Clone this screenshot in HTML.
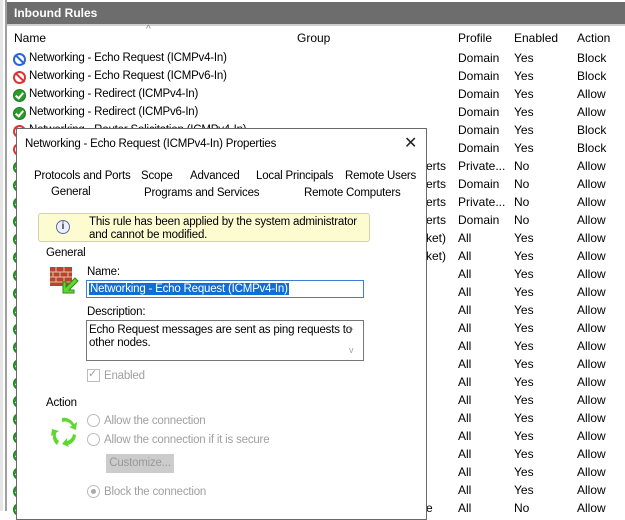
<!DOCTYPE html>
<html><head><style>
body{margin:0;width:625px;height:511px;overflow:hidden;background:#fff;font-family:"Liberation Sans",sans-serif;font-size:12px;color:#000;position:relative}
.a{position:absolute;white-space:nowrap}
.dl{font-size:11.5px;letter-spacing:-0.2px;margin-top:1px}
.ic{position:absolute;width:12px;height:12px;border-radius:50%;left:13px}
.g{background:#2a9a2a;border:1px solid #1c7a1c;width:11px;height:11px}
.g:after{content:"";position:absolute;left:3px;top:1px;width:3px;height:6px;border:solid #fff;border-width:0 2px 2px 0;transform:rotate(40deg)}
.bl{border:2px solid #d33;width:9px;height:9px}
.bl:after{content:"";position:absolute;left:4px;top:-2px;width:2px;height:13px;background:#d33;transform:rotate(-45deg)}
.bb{border-color:#2b66d6}.bb:after{background:#2b66d6}
.dis{color:#a0a0a0}
</style></head><body>
<div class="a" style="left:0;top:0;width:3px;height:511px;background:#e6e6e6"></div>
<div class="a" style="left:5px;top:0;width:2px;height:511px;background:#a0a0a0"></div>
<div class="a" style="left:7px;top:2px;width:618px;height:22px;background:#6d6d6d"></div>
<div class="a" style="left:7px;top:24px;width:618px;height:2px;background:#d0d0d0"></div>
<div class="a" style="left:14px;top:6px;color:#fff;font-weight:bold;font-size:12px">Inbound Rules</div>
<div class="a" style="left:146px;top:24px;font-size:10px;color:#888">^</div>
<div class="a" style="left:14px;top:31px">Name</div>
<div class="a" style="left:297px;top:31px">Group</div>
<div class="a" style="left:458px;top:31px">Profile</div>
<div class="a" style="left:514px;top:31px">Enabled</div>
<div class="a" style="left:577px;top:31px">Action</div>
<div id="rows"></div>
<script>
var d=[["bb","Networking - Echo Request (ICMPv4-In)","","Domain","Yes","Block"],["bl","Networking - Echo Request (ICMPv6-In)","","Domain","Yes","Block"],["g","Networking - Redirect (ICMPv4-In)","","Domain","Yes","Allow"],["g","Networking - Redirect (ICMPv6-In)","","Domain","Yes","Allow"],["bl","Networking - Router Solicitation (ICMPv4-In)","","Domain","Yes","Block"],["bl","","","Domain","Yes","Block"],["g","","erts","Private...","No","Allow"],["g","","erts","Domain","No","Allow"],["g","","erts","Private...","No","Allow"],["g","","erts","Domain","No","Allow"],["g","","ket)","All","Yes","Allow"],["g","","ket)","All","Yes","Allow"]];
for(var i=12;i<25;i++)d.push(["g","","","All","Yes","Allow"]);
d.push(["g","","e","All","No","Allow"]);
var h="";
for(var i=0;i<d.length;i++){var y=51+i*18;var r=d[i];
h+='<div class="ic '+(r[0]=="bb"?"bl bb":r[0])+'" style="top:'+(y+2)+'px"></div>';
if(r[1])h+='<div class="a dl" style="left:29px;top:'+y+'px">'+r[1]+'</div>';
if(r[2])h+='<div class="a" style="left:426px;top:'+y+'px">'+r[2]+'</div>';
h+='<div class="a" style="left:458px;top:'+y+'px">'+r[3]+'</div><div class="a" style="left:514px;top:'+y+'px">'+r[4]+'</div><div class="a" style="left:577px;top:'+y+'px">'+r[5]+'</div>';}
document.getElementById("rows").innerHTML=h;
</script>
<!-- dialog -->
<div class="a" style="left:16px;top:128px;width:409px;height:390px;background:#fff;border:1px solid #6a6a6a"></div>
<div class="a dl" style="left:25px;top:137px">Networking - Echo Request (ICMPv4-In) Properties</div>
<div class="a" style="left:404px;top:133px;font-size:16px;font-weight:normal;color:#222">✕</div>
<div class="a dl" style="left:34px;top:169px">Protocols and Ports</div>
<div class="a dl" style="left:141px;top:169px">Scope</div>
<div class="a dl" style="left:190px;top:169px">Advanced</div>
<div class="a dl" style="left:256px;top:169px">Local Principals</div>
<div class="a dl" style="left:345px;top:169px">Remote Users</div>
<div class="a dl" style="left:51px;top:185px">General</div>
<div class="a dl" style="left:144px;top:186px">Programs and Services</div>
<div class="a dl" style="left:304px;top:186px">Remote Computers</div>
<div class="a" style="left:38px;top:213px;width:330px;height:27px;background:#fdfbd0;border:1px solid #d4d2b0;border-radius:3px"></div>
<div class="a" style="left:56px;top:220px;width:12px;height:12px;border:1px solid #5a6ea0;border-radius:50%;background:#eef;font-size:10px;text-align:center;line-height:12px;font-weight:bold;color:#334">i</div>
<div class="a dl" style="left:89px;top:215px;line-height:13px">This rule has been applied by the system administrator<br>and cannot be modified.</div>
<div class="a dl" style="left:46px;top:246px">General</div>
<svg class="a" style="left:48px;top:264px" width="32" height="32"><rect x="2" y="3" width="22" height="19" fill="#b5452e"/><path d="M2 8h22M2 13h22M2 18h22M8 3v5M16 3v5M5 8v5M12 8v5M20 8v5M8 13v5M16 13v5" stroke="#e8c0a0" stroke-width="1"/><path d="M30 17l-9 9h5v3h-11v-11h3v5l9-9z" fill="#5ed82f" stroke="#2e8a1a" stroke-width="1"/></svg>
<div class="a dl" style="left:87px;top:265px">Name:</div>
<div class="a" style="left:86px;top:280px;width:276px;height:16px;border:1px solid #3c7fd8"></div>
<div class="a dl" style="left:89px;top:282px;background:#0f6fd6;color:#fff;padding:0 1px;line-height:12px">Networking - Echo Request (ICMPv4-In)</div>
<div class="a dl" style="left:87px;top:305px">Description:</div>
<div class="a" style="left:86px;top:320px;width:276px;height:39px;border:1px solid #777"></div>
<div class="a dl" style="left:89px;top:323px;line-height:13px">Echo Request messages are sent as ping requests to<br>other nodes.</div>
<div class="a dis" style="left:349px;top:325px;font-size:9px">^</div>
<div class="a dis" style="left:349px;top:345px;font-size:9px">v</div>
<div class="a" style="left:87px;top:369px;width:11px;height:11px;border:1px solid #bbb"></div>
<div class="a dis" style="left:88px;top:367px;font-size:11px">✓</div>
<div class="a dis dl" style="left:104px;top:369px">Enabled</div>
<div class="a dl" style="left:46px;top:396px">Action</div>
<svg class="a" style="left:48px;top:415px" width="32" height="32"><path d="M14 3a11 11 0 0 1 12 6l3-2-1 8-7-3 3-1a8 8 0 0 0-10-4z" fill="#5ed82f"/><path d="M4 14l7 2-3 2a8 8 0 0 0 3 8l-2 4a11 11 0 0 1-4-10l-2 1z" fill="#5ed82f"/><path d="M28 20a11 11 0 0 1-8 10l1 2-7-3 5-6 0 3a8 8 0 0 0 6-7z" fill="#5ed82f"/></svg>
<div class="a" style="left:87px;top:414px;width:11px;height:11px;border:1px solid #bbb;border-radius:50%"></div>
<div class="a dis dl" style="left:104px;top:414px">Allow the connection</div>
<div class="a" style="left:87px;top:433px;width:11px;height:11px;border:1px solid #bbb;border-radius:50%"></div>
<div class="a dis dl" style="left:104px;top:433px">Allow the connection if it is secure</div>
<div class="a dis dl" style="left:106px;top:454px;width:68px;height:19px;background:#ccc;text-align:center;line-height:19px;color:#999;margin-top:0">Customize...</div>
<div class="a" style="left:87px;top:485px;width:11px;height:11px;border:1px solid #bbb;border-radius:50%"></div>
<div class="a" style="left:91px;top:489px;width:5px;height:5px;border-radius:50%;background:#aaa"></div>
<div class="a dis dl" style="left:104px;top:485px">Block the connection</div>
</body></html>
